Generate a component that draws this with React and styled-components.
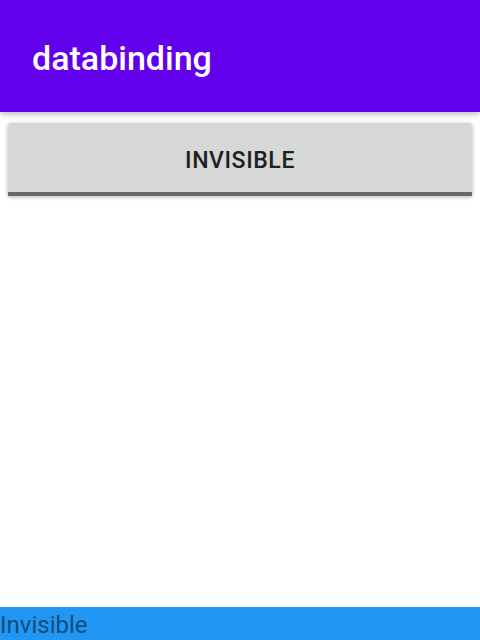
import React, { useState } from "react";
import styled, { createGlobalStyle } from "styled-components";

const GlobalStyle = createGlobalStyle`
  html, body {
    margin: 0;
    padding: 0;
    background: #ffffff;
    font-family: Roboto, "Noto Sans", sans-serif;
  }
`;

const Screen = styled.div`
  width: 100%;
  height: 100vh;
  display: flex;
  flex-direction: column;
  background: #ffffff;
`;

const AppBar = styled.header`
  height: 112px;
  flex-shrink: 0;
  background: #6200ee;
  display: flex;
  align-items: center;
  padding: 0 32px;
  box-sizing: border-box;
  box-shadow: 0 2px 6px rgba(0, 0, 0, 0.28);
  position: relative;
  z-index: 1;
`;

const Title = styled.h1`
  margin: 0;
  color: #ffffff;
  font-size: 34px;
  font-weight: 500;
  letter-spacing: 0;
  margin-top: 4px;
`;

const Content = styled.main`
  flex: 1;
  padding: 11px 8px 0;
`;

const ToggleButton = styled.button`
  width: 100%;
  height: 73px;
  border: none;
  border-bottom: 4px solid #686868;
  border-radius: 3px 3px 0 0;
  background: #d6d7d7;
  color: #202020;
  font-family: Roboto, sans-serif;
  font-size: 23px;
  font-weight: 500;
  letter-spacing: 0.6px;
  text-transform: uppercase;
  box-shadow: 0 1px 4px rgba(0, 0, 0, 0.3);
  cursor: pointer;
  padding: 6px 0 0;
`;

const StatusBar = styled.footer`
  height: 33px;
  flex-shrink: 0;
  background: #2196f3;
  display: flex;
  align-items: center;
`;

const StatusText = styled.span`
  font-size: 24px;
  color: rgba(0, 0, 0, 0.5);
  line-height: 1;
  margin-top: 2px;
`;

export default function App() {
  const [visible, setVisible] = useState(false);
  const label = visible ? "Visible" : "Invisible";

  return (
    <>
      <GlobalStyle />
      <Screen>
        <AppBar>
          <Title>databinding</Title>
        </AppBar>
        <Content>
          <ToggleButton onClick={() => setVisible(!visible)}>{label}</ToggleButton>
        </Content>
        <StatusBar>
          <StatusText>{label}</StatusText>
        </StatusBar>
      </Screen>
    </>
  );
}
